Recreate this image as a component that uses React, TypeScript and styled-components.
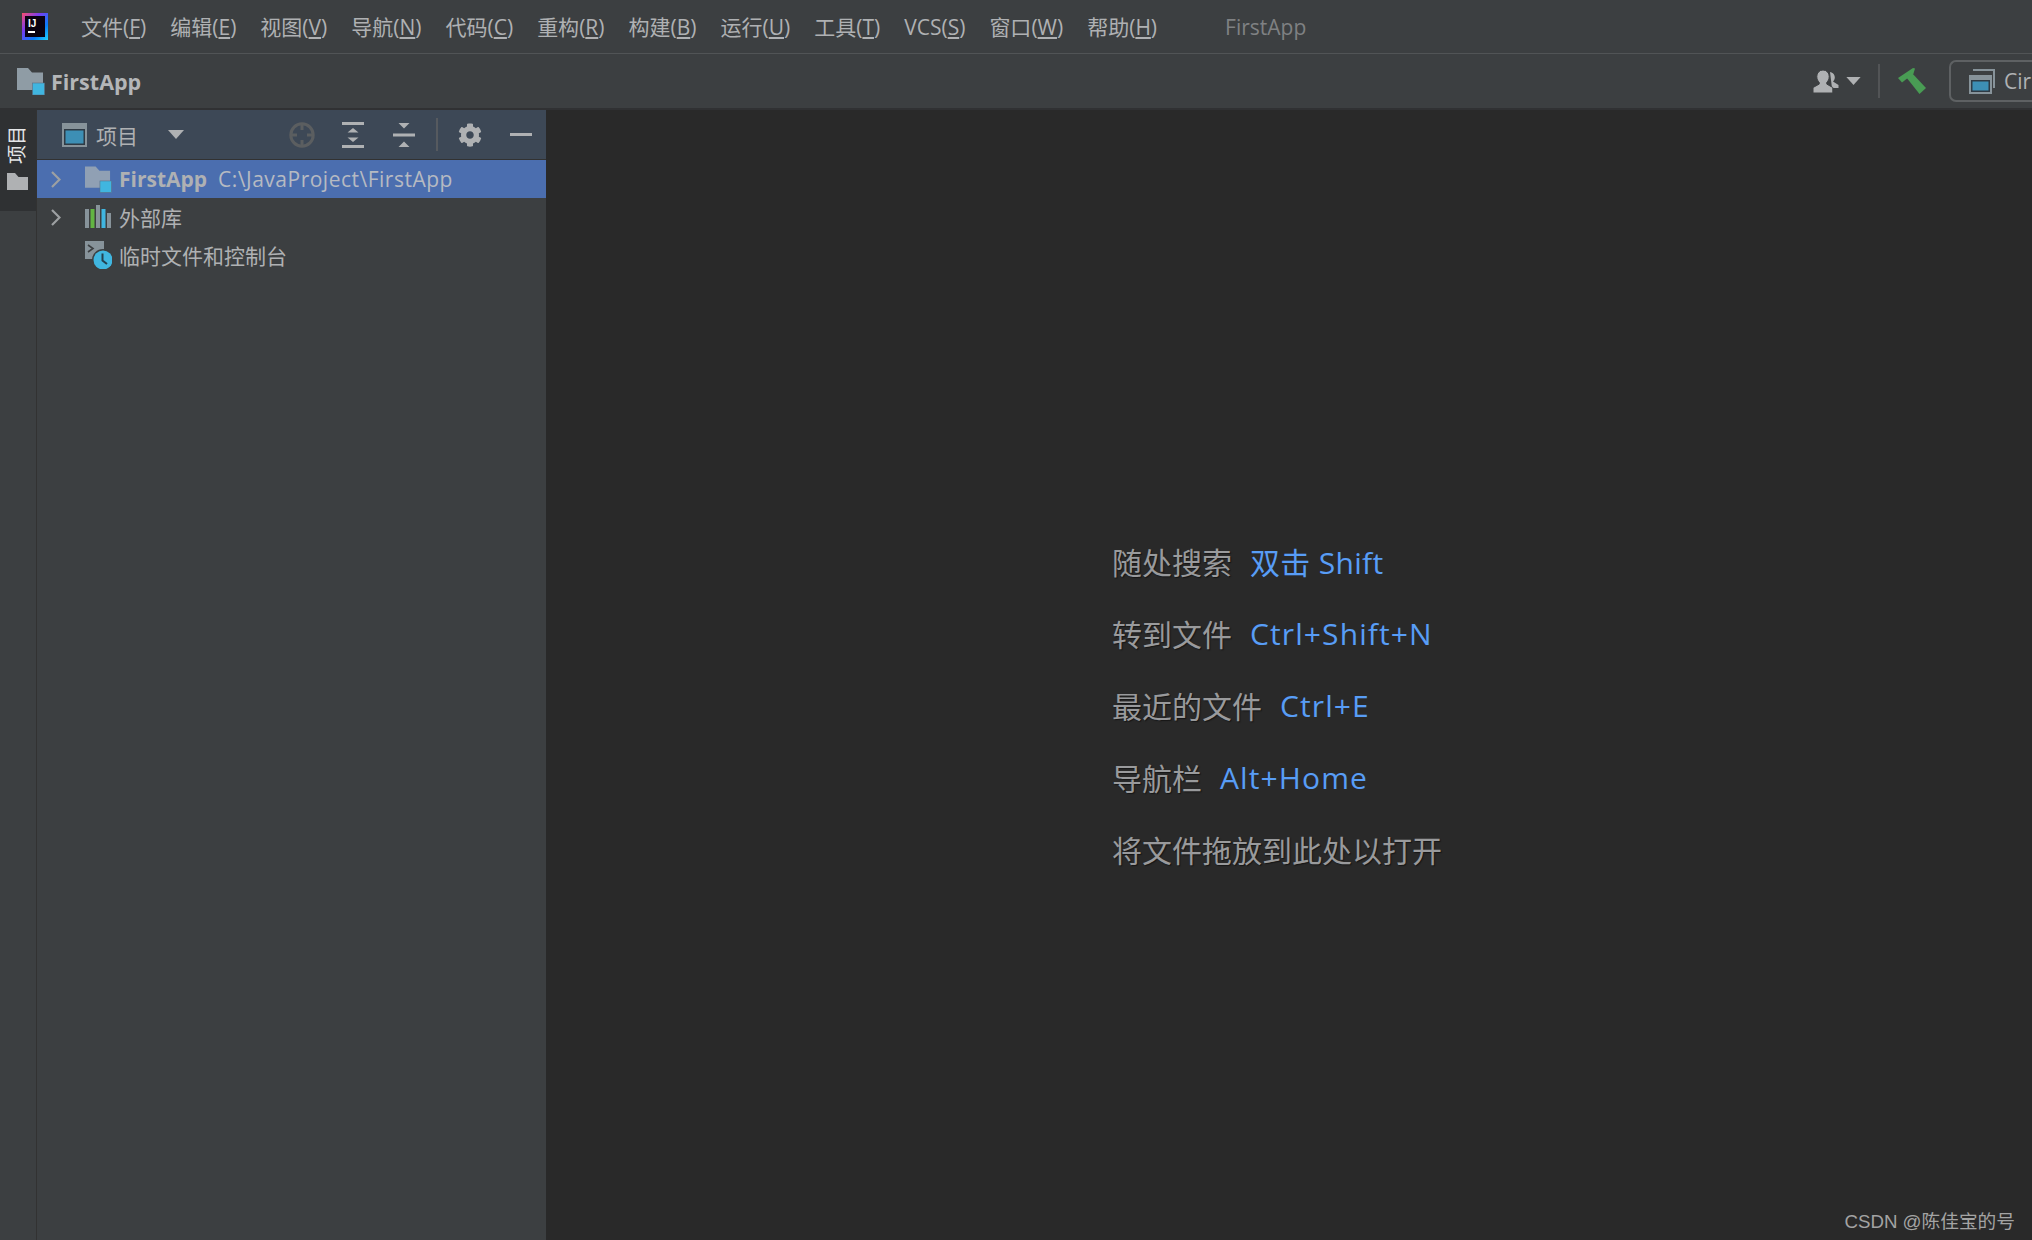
import React from "react";
import styled, { createGlobalStyle } from "styled-components";
import { FaCog } from "react-icons/fa";

const FONT = `"Open Sans", "Noto Sans CJK SC", sans-serif`;

const GlobalStyle = createGlobalStyle`
  html, body {
    margin: 0;
    padding: 0;
    background: #292929;
    overflow: hidden;
  }
  * {
    box-sizing: border-box;
  }
`;

const Page = styled.div`
  display: flex;
  flex-direction: column;
  width: 2032px;
  height: 1240px;
  overflow: hidden;
  font-family: ${FONT};
  background: #3c3f41;
`;

/* top menu */
const MenuBar = styled.div`
  display: flex;
  align-items: center;
  flex: none;
  height: 54px;
  padding-left: 22px;
  border-bottom: 1px solid #515456;
`;

const LogoBox = styled.div`
  display: flex;
  flex: none;
  width: 26px;
  height: 27px;
  margin-right: 33px;
`;

const MenuList = styled.div`
  display: flex;
  gap: 24px;
`;

const MenuEntry = styled.div`
  font-size: 21px;
  line-height: 28px;
  color: #afb1b3;
  white-space: nowrap;
  u {
    text-underline-offset: 2px;
  }
`;

const WindowTitle = styled.div`
  margin-left: 68px;
  font-size: 21px;
  line-height: 28px;
  color: #7f8183;
`;

/* project toolbar */
const ToolBar = styled.div`
  display: flex;
  align-items: center;
  flex: none;
  height: 54px;
  padding-left: 17px;
`;

const Crumb = styled.div`
  display: flex;
  align-items: center;
  gap: 6px;
  font-size: 21.5px;
  font-weight: 700;
  color: #b4b6b8;
`;

const ToolGroup = styled.div`
  display: flex;
  align-items: center;
  margin-left: auto;
`;

const UserButton = styled.div`
  display: flex;
  align-items: center;
  gap: 7px;
`;

const ToolSep = styled.div`
  width: 2px;
  height: 34px;
  margin: 0 18px 0 17px;
  background: #525456;
`;

const RunConfig = styled.div`
  display: flex;
  align-items: center;
  gap: 9px;
  width: 83px;
  height: 42px;
  margin-left: 22px;
  padding-left: 18px;
  overflow: hidden;
  border: 2px solid #5e6163;
  border-right: none;
  border-radius: 7px 0 0 7px;
  font-size: 21px;
  color: #afb1b3;
`;

/* main area */
const Workspace = styled.div`
  display: flex;
  flex: 1;
  min-height: 0;
  border-top: 2px solid #303133;
`;

const Strip = styled.div`
  flex: none;
  width: 37px;
  border-right: 1px solid #323232;
`;

const StripTab = styled.div`
  display: flex;
  flex-direction: column;
  align-items: center;
  height: 101px;
  padding: 16px 2px 0 0;
  background: #2f3133;
`;

const StripLabel = styled.div`
  writing-mode: vertical-rl;
  text-orientation: sideways;
  transform: rotate(180deg);
  font-size: 19px;
  line-height: 24px;
  color: #e4e6e8;
`;

const StripIcon = styled.div`
  display: flex;
  margin-top: 9px;
`;

const Panel = styled.div`
  display: flex;
  flex-direction: column;
  flex: none;
  width: 509px;
`;

const PanelHead = styled.div`
  display: flex;
  align-items: center;
  flex: none;
  height: 50px;
  padding-left: 25px;
  background: #3d4856;
  border-bottom: 1px solid #323232;
`;

const ViewPicker = styled.div`
  display: flex;
  align-items: center;
  font-size: 21px;
  color: #afb1b3;
`;

const ViewName = styled.span`
  margin: 0 30px 0 9px;
`;

const HeadActions = styled.div`
  display: flex;
  align-items: center;
  margin-left: auto;
`;

const HeadIcon = styled.div`
  display: flex;
  align-items: center;
  justify-content: center;
  width: 51px;
`;

const HeadSep = styled.div`
  width: 15px;
  height: 33px;
  background: linear-gradient(#565a5f, #565a5f) center / 2px 100% no-repeat;
`;

const Tree = styled.div`
  display: flex;
  flex-direction: column;
`;

const TreeRow = styled.div<{ $selected?: boolean }>`
  display: flex;
  align-items: center;
  height: 38px;
  padding-left: 14px;
  font-size: 21px;
  color: #afb1b3;
  white-space: nowrap;
  background: ${(p) => (p.$selected ? "#4b6eaf" : "transparent")};
`;

const Arrow = styled.div`
  display: flex;
  flex: none;
  width: 34px;
`;

const NodeIcon = styled.div`
  display: flex;
  flex: none;
  width: 27px;
  margin-right: 7px;
`;

const NodeName = styled.span<{ $bold?: boolean }>`
  font-weight: ${(p) => (p.$bold ? 700 : 400)};
`;

const NodePath = styled.span`
  margin-left: 11px;
  letter-spacing: 0.5px;
  color: #b6bac2;
`;

/* empty editor hints */
const Editor = styled.div`
  position: relative;
  flex: 1;
  padding: 415px 0 0 566px;
  background: #292929;
`;

const Hint = styled.div`
  display: flex;
  align-items: center;
  gap: 18px;
  height: 72px;
  font-size: 30px;
  white-space: nowrap;
`;

const HintLabel = styled.span`
  color: #999a9c;
  text-shadow: 1px 1px 1px #161616;
`;

const HintKey = styled.span<{ $tight?: boolean }>`
  letter-spacing: ${(p) => (p.$tight ? "0.3px" : "1.1px")};
  color: #589df6;
`;

const Watermark = styled.div`
  position: absolute;
  right: 17px;
  bottom: 6px;
  font-family: "Liberation Sans", "Noto Sans CJK SC", sans-serif;
  font-size: 18.7px;
  line-height: 24px;
  color: #a3a3a3;
`;

const Caret = ({ color = "#afb1b3", w = 16, h = 9 }: { color?: string; w?: number; h?: number }) => (
  <svg width={w} height={h} viewBox="0 0 16 9">
    <path d="M0 0h16L8 9z" fill={color} />
  </svg>
);

const LogoIcon = () => (
  <svg width="26" height="27" viewBox="0 0 26 27">
    <defs>
      <linearGradient id="ijEdge" x1="0" y1="0" x2="1" y2="1">
        <stop offset="0" stopColor="#fc4e6c" />
        <stop offset="0.35" stopColor="#7a3cf0" />
        <stop offset="0.7" stopColor="#087cfa" />
        <stop offset="1" stopColor="#21d4fd" />
      </linearGradient>
    </defs>
    <rect width="26" height="27" fill="url(#ijEdge)" />
    <rect x="3" y="3" width="20" height="21" fill="#0a0212" />
    <text x="6" y="14" fontFamily="Liberation Sans, sans-serif" fontWeight="700" fontSize="10" fill="#fff">
      IJ
    </text>
    <rect x="6" y="18" width="7" height="2" fill="#fff" />
  </svg>
);

const ProjectFolder = ({ color = "#8f9ca5" }: { color?: string }) => (
  <svg width="28" height="27" viewBox="0 0 28 27">
    <path d="M0 0h11l4 4.500h11V22H0z" fill={color} />
    <rect x="15.500" y="15" width="12" height="12" fill="#40b6e0" stroke="#5a6f86" strokeWidth="0.6" />
  </svg>
);

const StripFolder = () => (
  <svg width="21" height="17" viewBox="0 0 21 17">
    <path d="M0 0h8l3.500 4H21v13H0z" fill="#afb1b3" />
  </svg>
);

const LibraryIcon = () => (
  <svg width="27" height="24" viewBox="0 0 27 24">
    <rect x="0" y="4" width="4" height="19" fill="#87939a" />
    <rect x="5.500" y="4" width="4" height="19" fill="#62b543" />
    <rect x="11" y="0" width="4" height="23" fill="#87939a" />
    <rect x="16.500" y="4" width="4" height="19" fill="#40b6e0" />
    <rect x="22" y="8" width="4" height="15" fill="#87939a" />
  </svg>
);

const ScratchIcon = () => (
  <svg width="27" height="28" viewBox="0 0 27 28">
    <rect x="0" y="0" width="19" height="18" fill="#87939a" />
    <path d="M3 4l5 3.500L3 11" fill="none" stroke="#3c3f41" strokeWidth="1.6" />
    <circle cx="18" cy="19" r="11" fill="#3c3f41" />
    <circle cx="18" cy="19" r="9.500" fill="#40b6e0" />
    <path d="M17.500 12.500V19.500L22 23" fill="none" stroke="#23404f" strokeWidth="2" />
  </svg>
);

const ChevronIcon = () => (
  <svg width="10" height="17" viewBox="0 0 10 17">
    <path d="M1 1l7.500 7.500L1 16" fill="none" stroke="#9da0a2" strokeWidth="2.200" />
  </svg>
);

const WindowIcon = () => (
  <svg width="25" height="24" viewBox="0 0 25 24">
    <rect width="25" height="24" fill="#87939a" />
    <rect x="2" y="6" width="21" height="16" fill="#2f3a44" />
    <rect x="3.500" y="7.500" width="18" height="13" fill="#3d8fb5" />
  </svg>
);

const CrosshairIcon = () => (
  <svg width="26" height="26" viewBox="0 0 26 26" fill="none" stroke="#5b5e60" strokeWidth="3">
    <circle cx="13" cy="13" r="11.200" />
    <path d="M13 2v6M13 18v6M2 13h6M18 13h6" />
  </svg>
);

const ExpandIcon = () => (
  <svg width="22" height="26" viewBox="0 0 22 26" fill="#afb1b3">
    <rect width="22" height="3" />
    <path d="M11 6l5.500 4.500h-11zM11 20l5.500-4.500h-11z" />
    <rect y="23" width="22" height="3" />
  </svg>
);

const CollapseIcon = () => (
  <svg width="22" height="24" viewBox="0 0 22 24" fill="#afb1b3">
    <path d="M5.500 0h11L11 5.500zM5.500 24h11L11 18.500z" />
    <rect y="10.500" width="22" height="3" />
  </svg>
);

const MinusIcon = () => (
  <svg width="22" height="3" viewBox="0 0 22 3">
    <rect width="22" height="3" fill="#afb1b3" />
  </svg>
);

const UserIcon = () => (
  <svg width="26" height="23" viewBox="0 0 26 23">
    <path d="M17 2a5.500 5.500 0 0 1 3 9.500l5.500 3.500v3H19z" fill="#afb1b3" />
    <path
      d="M10 0a6.200 6.200 0 0 1 6.200 6.500c0 2.600-1 4.600-2.400 5.800v1.800l6 3.400V23H0v-5.500l6.200-3.400v-1.800C4.800 11.100 3.800 9.100 3.800 6.500A6.200 6.200 0 0 1 10 0z"
      fill="#afb1b3"
      stroke="#3c3f41"
      strokeWidth="1"
    />
  </svg>
);

const HammerIcon = () => (
  <svg width="29" height="26" viewBox="0 0 29 26" fill="#499c54">
    <path d="M0 10L15 0l2 0.500-1.500 5L4 14.500z" />
    <path d="M8 9l5.500-4.500L28 20l-6.500 6z" />
  </svg>
);

const RunWindowIcon = () => (
  <svg width="26" height="25" viewBox="0 0 26 25">
    <path d="M4 0h22v19h-2V2H4z" fill="#87939a" />
    <rect x="0" y="6" width="23" height="19" fill="#87939a" />
    <rect x="2" y="11" width="19" height="12" fill="#2f3a44" />
    <rect x="3.500" y="12.500" width="16" height="9" fill="#3d8fb5" />
  </svg>
);

const menus = [
  ["文件", "F"],
  ["编辑", "E"],
  ["视图", "V"],
  ["导航", "N"],
  ["代码", "C"],
  ["重构", "R"],
  ["构建", "B"],
  ["运行", "U"],
  ["工具", "T"],
  ["VCS", "S"],
  ["窗口", "W"],
  ["帮助", "H"],
];

const hints = [
  ["随处搜索", "双击 Shift"],
  ["转到文件", "Ctrl+Shift+N"],
  ["最近的文件", "Ctrl+E"],
  ["导航栏", "Alt+Home"],
  ["将文件拖放到此处以打开", ""],
];

const App = () => {
  return (
    <Page>
      <GlobalStyle />
      <MenuBar>
        <LogoBox>
          <LogoIcon />
        </LogoBox>
        <MenuList>
          {menus.map(([name, key]) => (
            <MenuEntry key={key}>
              {name}(<u>{key}</u>)
            </MenuEntry>
          ))}
        </MenuList>
        <WindowTitle>FirstApp</WindowTitle>
      </MenuBar>

      <ToolBar>
        <Crumb>
          <ProjectFolder />
          FirstApp
        </Crumb>
        <ToolGroup>
          <UserButton>
            <UserIcon />
            <Caret w={15} h={8} />
          </UserButton>
          <ToolSep />
          <HammerIcon />
          <RunConfig>
            <RunWindowIcon />
            Cir
          </RunConfig>
        </ToolGroup>
      </ToolBar>

      <Workspace>
        <Strip>
          <StripTab>
            <StripLabel>项目</StripLabel>
            <StripIcon>
              <StripFolder />
            </StripIcon>
          </StripTab>
        </Strip>

        <Panel>
          <PanelHead>
            <ViewPicker>
              <WindowIcon />
              <ViewName>项目</ViewName>
              <Caret />
            </ViewPicker>
            <HeadActions>
              <HeadIcon>
                <CrosshairIcon />
              </HeadIcon>
              <HeadIcon>
                <ExpandIcon />
              </HeadIcon>
              <HeadIcon>
                <CollapseIcon />
              </HeadIcon>
              <HeadSep />
              <HeadIcon>
                <FaCog size={24} color="#afb1b3" />
              </HeadIcon>
              <HeadIcon>
                <MinusIcon />
              </HeadIcon>
            </HeadActions>
          </PanelHead>
          <Tree>
            <TreeRow $selected>
              <Arrow>
                <ChevronIcon />
              </Arrow>
              <NodeIcon>
                <ProjectFolder color="#90a0b4" />
              </NodeIcon>
              <NodeName $bold>FirstApp</NodeName>
              <NodePath>C:\JavaProject\FirstApp</NodePath>
            </TreeRow>
            <TreeRow>
              <Arrow>
                <ChevronIcon />
              </Arrow>
              <NodeIcon>
                <LibraryIcon />
              </NodeIcon>
              <NodeName>外部库</NodeName>
            </TreeRow>
            <TreeRow>
              <Arrow />
              <NodeIcon>
                <ScratchIcon />
              </NodeIcon>
              <NodeName>临时文件和控制台</NodeName>
            </TreeRow>
          </Tree>
        </Panel>

        <Editor>
          {hints.map(([label, shortcut]) => (
            <Hint key={label}>
              <HintLabel>{label}</HintLabel>
              {shortcut && <HintKey $tight={!shortcut.includes("+")}>{shortcut}</HintKey>}
            </Hint>
          ))}
          <Watermark>CSDN @陈佳宝的号</Watermark>
        </Editor>
      </Workspace>
    </Page>
  );
};

export default App;
